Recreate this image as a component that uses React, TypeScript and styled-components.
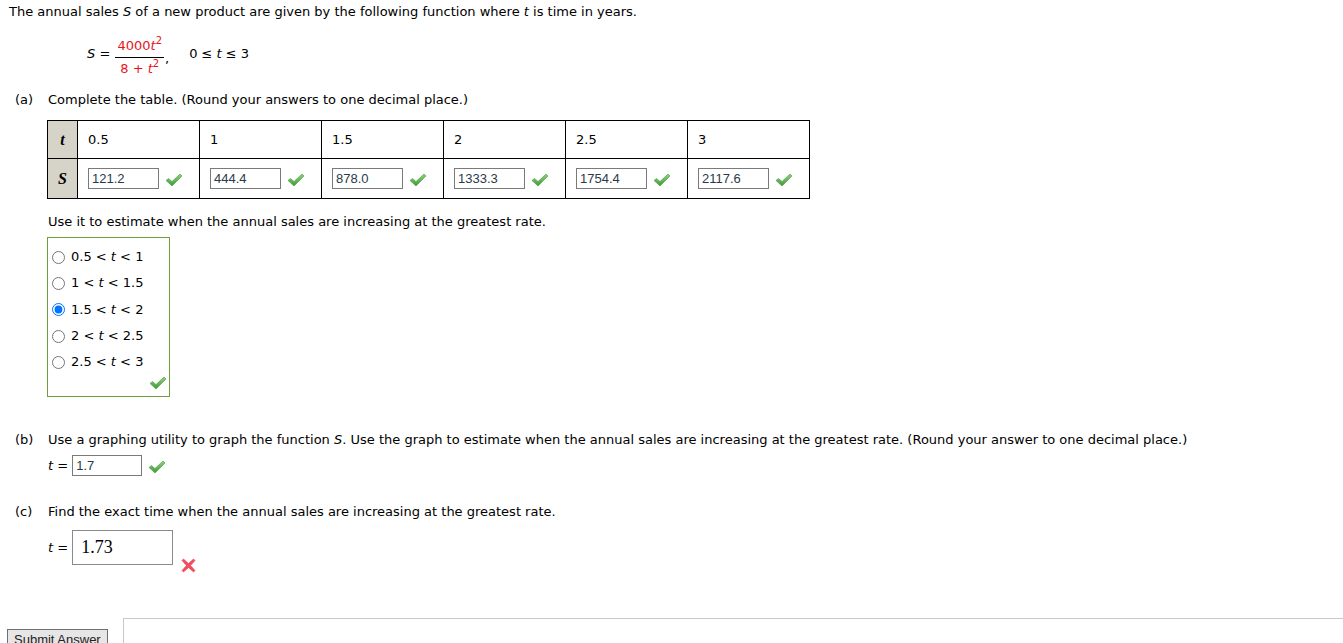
import React from 'react';
import styled, { createGlobalStyle } from 'styled-components';

const GlobalStyle = createGlobalStyle`
  html, body {
    margin: 0;
    padding: 0;
    background: #fff;
  }
  body {
    font-family: Verdana, "DejaVu Sans", sans-serif;
    font-size: 13px;
    color: #000;
  }
`;

const tValues = ['0.5', '1', '1.5', '2', '2.5', '3'];
const sValues = ['121.2', '444.4', '878.0', '1333.3', '1754.4', '2117.6'];
const options = [
  ['0.5', '1'],
  ['1', '1.5'],
  ['1.5', '2'],
  ['2', '2.5'],
  ['2.5', '3'],
];

const CheckMark: React.FC = () => (
  <CheckIcon width="18" height="14" viewBox="0 0 18 14">
    <defs>
      <linearGradient id="chk" x1="0" y1="0" x2="0" y2="1">
        <stop offset="0" stopColor="#8fd27a" />
        <stop offset="1" stopColor="#3f9a3a" />
      </linearGradient>
    </defs>
    <path
      d="M1 7.5 L3.5 5.5 L7 8.5 L15 1 L17 3 L7 13 Z"
      fill="url(#chk)"
      stroke="#4c9a43"
      strokeWidth="0.6"
      strokeLinejoin="round"
    />
  </CheckIcon>
);

const CrossMark: React.FC = () => (
  <CrossIcon width="15" height="15" viewBox="0 0 15 15">
    <path
      d="M2.5 1 L7.5 5.5 L12.5 1 L14 2.5 L9.5 7.5 L14 12.5 L12.5 14 L7.5 9.5 L2.5 14 L1 12.5 L5.5 7.5 L1 2.5 Z"
      fill="#f0505e"
      stroke="#e63a4c"
      strokeWidth="0.6"
      strokeLinejoin="round"
    />
  </CrossIcon>
);

const App: React.FC = () => {
  return (
    <>
      <GlobalStyle />
      <Page>
        <Intro>
          The annual sales <Var>S</Var> of a new product are given by the following function where{' '}
          <Var>t</Var> is time in years.
        </Intro>

        <Formula>
          <FormulaText>
            <Var>S</Var>&nbsp;=&nbsp;
          </FormulaText>
          <Fraction>
            <Numerator>
              4000<Var>t</Var>
              <sup>2</sup>
            </Numerator>
            <Denominator>
              8 + <Var>t</Var>
              <sup>2</sup>
            </Denominator>
          </Fraction>
          <Comma>,</Comma>
          <Domain>
            0 ≤ <Var>t</Var> ≤ 3
          </Domain>
        </Formula>

        <Part $top={16}>
          <PartLabel>(a)</PartLabel>
          <PartBody>
            <PartText>Complete the table. (Round your answers to one decimal place.)</PartText>
            <Table>
              <tbody>
                <tr>
                  <HeadCell>t</HeadCell>
                  {tValues.map((v) => (
                    <ValueCell key={v}>{v}</ValueCell>
                  ))}
                </tr>
                <tr>
                  <HeadCell>S</HeadCell>
                  {sValues.map((v) => (
                    <AnswerCell key={v}>
                      <AnswerInput>{v}</AnswerInput>
                      <CheckMark />
                    </AnswerCell>
                  ))}
                </tr>
              </tbody>
            </Table>

            <Question>Use it to estimate when the annual sales are increasing at the greatest rate.</Question>
            <ChoiceBox>
              {options.map(([lo, hi]) => (
                <Choice key={lo}>
                  <Radio type="radio" name="rate" defaultChecked={lo === '1.5'} />
                  <span>
                    {lo} &lt; <Var>t</Var> &lt; {hi}
                  </span>
                </Choice>
              ))}
              <ChoiceCheck>
                <CheckMark />
              </ChoiceCheck>
            </ChoiceBox>
          </PartBody>
        </Part>

        <Part $top={35}>
          <PartLabel>(b)</PartLabel>
          <PartBody>
            <PartText>
              Use a graphing utility to graph the function <Var>S</Var>. Use the graph to estimate when the
              annual sales are increasing at the greatest rate. (Round your answer to one decimal place.)
            </PartText>
            <AnswerLine>
              <Var>t</Var>&nbsp;=&nbsp;
              <AnswerInput $width={70}>1.7</AnswerInput>
              <CheckMark />
            </AnswerLine>
          </PartBody>
        </Part>

        <Part $top={28}>
          <PartLabel>(c)</PartLabel>
          <PartBody>
            <PartText>Find the exact time when the annual sales are increasing at the greatest rate.</PartText>
            <ExactLine>
              <Var>t</Var>&nbsp;=&nbsp;
              <ExactInput>1.73</ExactInput>
              <CrossMark />
            </ExactLine>
          </PartBody>
        </Part>

        <Footer>
          <SubmitButton>Submit Answer</SubmitButton>
          <NotesBox />
        </Footer>
      </Page>
    </>
  );
};

const Page = styled.div`
  padding: 4px 0 0 9px;
  height: 643px;
  overflow: hidden;
  box-sizing: border-box;
`;

const Intro = styled.div`
  line-height: 16px;
`;

const Var = styled.i`
  font-style: italic;
`;

const Formula = styled.div`
  display: flex;
  align-items: center;
  margin: 18px 0 0 78px;
`;

const FormulaText = styled.span`
  margin-bottom: 8px;
`;

const Fraction = styled.span`
  display: inline-flex;
  flex-direction: column;
  align-items: center;
  margin-left: 1px;

  sup {
    font-size: 10px;
    line-height: 0;
    vertical-align: 6px;
  }
`;

const Numerator = styled.span`
  color: #e8141c;
  padding: 0 2px 4px;
  border-bottom: 1px solid #000;
  line-height: 15px;
`;

const Denominator = styled.span`
  color: #e8141c;
  padding-top: 3px;
  line-height: 15px;
`;

const Comma = styled.span`
  align-self: center;
  margin: 2px 0 0 1px;
`;

const Domain = styled(FormulaText)`
  margin-left: 20px;
`;

const Part = styled.div<{ $top: number }>`
  display: flex;
  margin-top: ${({ $top }) => $top}px;
  padding-left: 6px;
`;

const PartLabel = styled.div`
  width: 33px;
  flex-shrink: 0;
  line-height: 16px;
`;

const PartBody = styled.div`
  display: flex;
  flex-direction: column;
  align-items: flex-start;
`;

const PartText = styled.div`
  line-height: 16px;
  white-space: nowrap;
`;

const Table = styled.table`
  border-collapse: collapse;
  margin-top: 12px;
  margin-left: -1px;
  border: 1px solid #000;

  td {
    border: 1px solid #000;
  }
`;

const HeadCell = styled.td`
  width: 29px;
  padding: 0;
  background: #d6d3c9;
  text-align: center;
  font-family: "Liberation Serif", "Times New Roman", serif;
  font-weight: bold;
  font-style: italic;
  font-size: 16px;
`;

const ValueCell = styled.td`
  width: 122px;
  height: 38px;
  padding: 0 0 0 10px;
  box-sizing: border-box;
`;

const AnswerCell = styled.td`
  height: 40px;
  padding: 0 0 0 10px;
  box-sizing: border-box;
  white-space: nowrap;
`;

const AnswerInput = styled.span<{ $width?: number }>`
  display: inline-flex;
  align-items: center;
  box-sizing: border-box;
  width: ${({ $width }) => $width ?? 71}px;
  height: 21px;
  padding: 0 3px;
  border: 1px solid #7a7a7a;
  font-family: "Liberation Sans", Arial, sans-serif;
  font-size: 13px;
  color: #2a3a4a;
  vertical-align: middle;
`;

const CheckIcon = styled.svg`
  display: inline-block;
  vertical-align: middle;
  margin-left: 6px;
  margin-top: 3px;
`;

const CrossIcon = styled.svg`
  align-self: flex-end;
  margin-left: 8px;
  margin-bottom: -8px;
`;

const Question = styled.div`
  margin-top: 15px;
  line-height: 16px;
`;

const ChoiceBox = styled.div`
  margin-top: 7px;
  margin-left: -1px;
  width: 123px;
  height: 160px;
  box-sizing: border-box;
  border: 1px solid #6a9f3a;
  padding: 6px 0 0 4px;
  display: flex;
  flex-direction: column;
  position: relative;
`;

const Choice = styled.label`
  display: flex;
  align-items: center;
  height: 26.3px;
  line-height: 16px;
`;

const Radio = styled.input`
  margin: 0 6px 0 0;
  width: 13px;
  height: 13px;
`;

const ChoiceCheck = styled.div`
  position: absolute;
  right: 2px;
  bottom: 6px;
`;

const AnswerLine = styled.div`
  display: flex;
  align-items: center;
  margin-top: 7px;
  line-height: 16px;
`;

const ExactLine = styled.div`
  display: flex;
  align-items: center;
  margin-top: 10px;
`;

const ExactInput = styled.span`
  display: inline-flex;
  align-items: center;
  box-sizing: border-box;
  width: 101px;
  height: 35px;
  padding: 0 8px;
  border: 1px solid #8a8a8a;
  font-family: "Liberation Serif", "Times New Roman", serif;
  font-size: 18px;
  color: #000;
`;

const Footer = styled.div`
  display: flex;
  align-items: flex-start;
  margin-top: 53px;
  margin-left: -2px;
`;

const SubmitButton = styled.button`
  margin-top: 11px;
  height: 22px;
  padding: 0 6px;
  font-family: "Liberation Sans", Arial, sans-serif;
  font-size: 13px;
  color: #222;
  background: #e6e6e6;
  border: 1px solid #707070;
  border-radius: 0;
  line-height: 18px;
  align-self: flex-start;
`;

const NotesBox = styled.div`
  flex: 1;
  height: 60px;
  margin-left: 15px;
  border-top: 1px solid #c8c8c8;
  border-left: 1px solid #c8c8c8;
`;

export default App;
